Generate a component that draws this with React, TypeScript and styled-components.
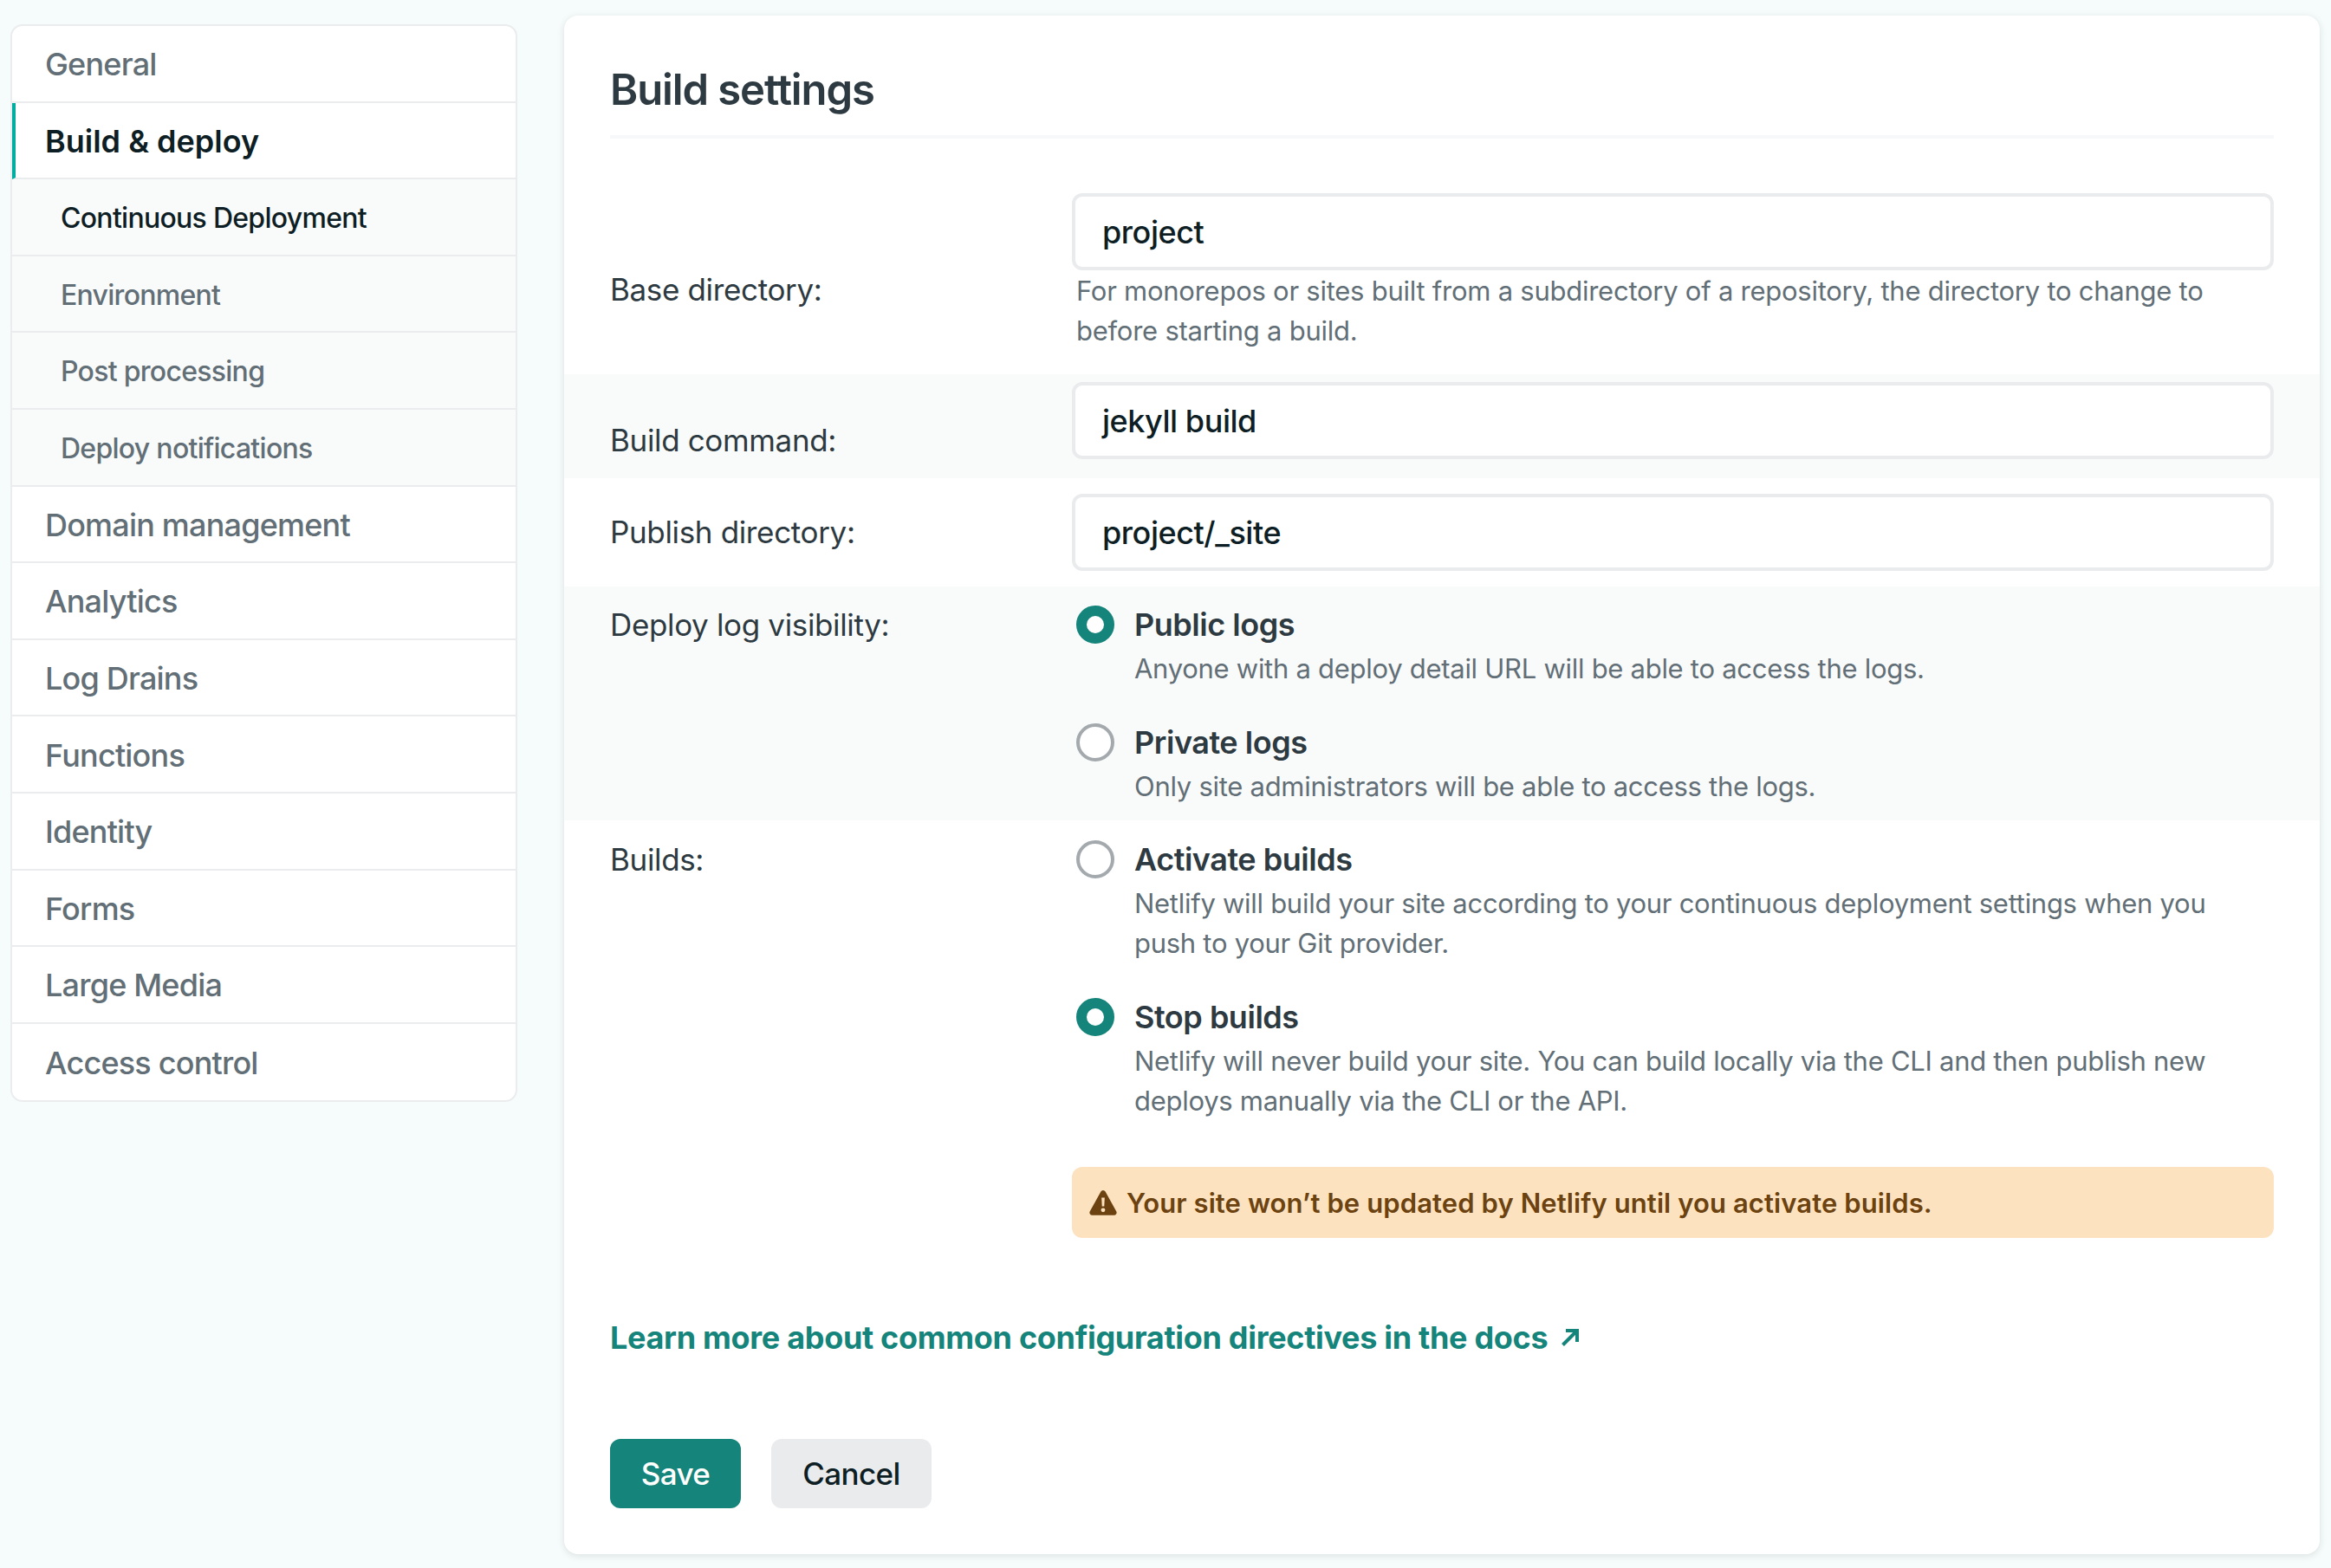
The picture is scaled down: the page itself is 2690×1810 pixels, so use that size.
import styled, { createGlobalStyle } from 'styled-components';

const GlobalStyle = createGlobalStyle`
  html, body {
    margin: 0;
    padding: 0;
    background: #f6fcfb;
    font-family: Inter, "Liberation Sans", sans-serif;
  }
  * {
    box-sizing: border-box;
  }
`;

const subPages = ['Continuous Deployment', 'Environment', 'Post processing', 'Deploy notifications'];
const lowerPages = ['Domain management', 'Analytics', 'Log Drains', 'Functions', 'Identity', 'Forms', 'Large Media', 'Access control'];

export default function App() {
  return (
    <Page>
      <GlobalStyle />
      <Sidebar>
        <NavItem>General</NavItem>
        <NavItem $active>Build &amp; deploy</NavItem>
        {subPages.map((name, i) => (
          <SubItem key={name} $active={i === 0}>{name}</SubItem>
        ))}
        {lowerPages.map(name => (
          <NavItem key={name}>{name}</NavItem>
        ))}
      </Sidebar>
      <Card>
        <Heading>Build settings</Heading>
        <Row $top={63} $bottom={27}>
          <Label $top={88}>Base directory:</Label>
          <div>
            <Input>project</Input>
            <FieldHint>
              For monorepos or sites built from a subdirectory of a repository, the directory to change to before starting a build.
            </FieldHint>
          </div>
        </Row>
        <Row $shaded $top={9} $bottom={21}>
          <Label $top={44}>Build command:</Label>
          <Input>jekyll build</Input>
        </Row>
        <Row $top={18} $bottom={18}>
          <Label $top={21}>Publish directory:</Label>
          <Input>project/_site</Input>
        </Row>
        <Row $shaded $top={21} $bottom={16}>
          <Label>Deploy log visibility:</Label>
          <Options>
            <Option>
              <Radio $checked />
              <div>
                <OptionTitle>Public logs</OptionTitle>
                <OptionText>Anyone with a deploy detail URL will be able to access the logs.</OptionText>
              </div>
            </Option>
            <Option>
              <Radio />
              <div>
                <OptionTitle>Private logs</OptionTitle>
                <OptionText>Only site administrators will be able to access the logs.</OptionText>
              </div>
            </Option>
          </Options>
        </Row>
        <Row $top={22} $bottom={0}>
          <Label>Builds:</Label>
          <div>
            <Options>
              <Option>
                <Radio />
                <div>
                  <OptionTitle>Activate builds</OptionTitle>
                  <OptionText>
                    Netlify will build your site according to your continuous deployment settings when you push to your Git provider.
                  </OptionText>
                </div>
              </Option>
              <Option>
                <Radio $checked />
                <div>
                  <OptionTitle>Stop builds</OptionTitle>
                  <OptionText>
                    Netlify will never build your site. You can build locally via the CLI and then publish new deploys manually via the CLI or the API.
                  </OptionText>
                </div>
              </Option>
            </Options>
            <Warning>
              <svg width="32" height="29" viewBox="0 0 32 29" aria-hidden="true">
                <path
                  fill="#6b4210"
                  fillRule="evenodd"
                  d="M13.4 1.6a3 3 0 0 1 5.2 0l12.6 22.6a3 3 0 0 1-2.6 4.5H3.4a3 3 0 0 1-2.6-4.5zM14.2 8.5l.5 10h2.6l.5-10zM16 20.4a2.4 2.4 0 1 0 0 4.8 2.4 2.4 0 0 0 0-4.8z"
                />
              </svg>
              Your site won’t be updated by Netlify until you activate builds.
            </Warning>
          </div>
        </Row>
        <DocsLink>
          Learn more about common configuration directives in the docs
          <svg width="22" height="22" viewBox="0 0 22 22" aria-hidden="true">
            <path d="M2.5 19.5 18 4M6 3h13v13" fill="none" stroke="#15847b" strokeWidth="4" />
          </svg>
        </DocsLink>
        <Actions>
          <SaveButton>Save</SaveButton>
          <CancelButton>Cancel</CancelButton>
        </Actions>
      </Card>
    </Page>
  );
}

const Page = styled.div`
  display: flex;
  align-items: flex-start;
  width: 2690px;
  height: 1810px;
  padding: 18px 13px 0 12px;
  overflow: hidden;
`;

const Sidebar = styled.nav`
  display: flex;
  flex-direction: column;
  flex: none;
  width: 585px;
  margin-top: 10px;
  margin-right: 54px;
  background: #fff;
  border: 2px solid #eaecee;
  border-radius: 14px;
  overflow: hidden;
`;

const NavItem = styled.a<{ $active?: boolean }>`
  display: flex;
  align-items: center;
  height: 88.6px;
  padding: 2px 0 0 ${p => (p.$active ? 34 : 38)}px;
  font-size: 36px;
  letter-spacing: ${p => (p.$active ? '0' : '-0.8px')};
  font-weight: ${p => (p.$active ? 600 : 500)};
  color: ${p => (p.$active ? '#0e1e25' : '#626f77')};
  border-bottom: 2px solid #eaecee;
  border-left: ${p => (p.$active ? '4px solid #00ad9f' : 'none')};
  &:last-child {
    border-bottom: none;
  }
`;

const SubItem = styled.a<{ $active?: boolean }>`
  display: flex;
  align-items: center;
  height: 88.6px;
  padding: 2px 0 0 56px;
  font-size: 32px;
  letter-spacing: -0.72px;
  font-weight: 500;
  color: ${p => (p.$active ? '#0e1e25' : '#626f77')};
  background: #f9fafa;
  border-bottom: 2px solid #eaecee;
`;

const Card = styled.main`
  flex: none;
  width: 2026px;
  height: 1776px;
  background: #fff;
  border-radius: 16px;
  box-shadow: 0 2px 8px rgba(14, 30, 37, 0.12);
`;

const Heading = styled.h2`
  margin: 0 53px;
  padding-top: 50px;
  height: 142px;
  font-size: 49px;
  letter-spacing: -1.1px;
  line-height: 72px;
  font-weight: 600;
  color: #2e3a41;
  border-bottom: 4px solid #f7f8f9;
`;

const Row = styled.div<{ $shaded?: boolean; $top: number; $bottom: number }>`
  display: grid;
  grid-template-columns: 533px 1387px;
  padding: ${p => p.$top}px 53px ${p => p.$bottom}px;
  background: ${p => (p.$shaded ? '#f9fafa' : 'transparent')};
`;

const Label = styled.div<{ $top?: number }>`
  padding-top: ${p => p.$top ?? 0}px;
  font-size: 35px;
  letter-spacing: -0.35px;
  line-height: 46px;
  color: #2e3a41;
`;

const Input = styled.div`
  display: flex;
  align-items: center;
  height: 89px;
  padding-left: 31px;
  font-size: 36px;
  letter-spacing: -0.45px;
  font-weight: 500;
  color: #0e1e25;
  background: #fff;
  border: 4px solid #e9ebed;
  border-radius: 12px;
`;

const FieldHint = styled.p`
  margin: 1px 30px 0 5px;
  font-size: 31px;
  letter-spacing: -0.25px;
  line-height: 46px;
  color: #626f77;
`;

const Options = styled.div`
  display: flex;
  flex-direction: column;
  gap: 39px;
`;

const Option = styled.div`
  display: flex;
  gap: 23px;
  padding: 0 40px 0 5px;
`;

const Radio = styled.span<{ $checked?: boolean }>`
  flex: none;
  width: 44px;
  height: 44px;
  margin-top: 1px;
  border-radius: 50%;
  background: #fff;
  border: ${p => (p.$checked ? '12px solid #15847b' : '4px solid #a3a9ac')};
`;

const OptionTitle = styled.div`
  font-size: 36px;
  letter-spacing: -0.47px;
  line-height: 46px;
  font-weight: 600;
  color: #2e3a41;
`;

const OptionText = styled.div`
  margin-top: 5px;
  font-size: 31px;
  letter-spacing: -0.28px;
  line-height: 46px;
  color: #626f77;
`;

const Warning = styled.div`
  display: flex;
  align-items: center;
  gap: 11px;
  height: 82px;
  margin-top: 53px;
  padding-left: 20px;
  font-size: 31px;
  letter-spacing: 0.1px;
  font-weight: 600;
  color: #6b4210;
  background: #fde2bf;
  border-radius: 12px;
`;

const DocsLink = styled.a`
  display: flex;
  align-items: center;
  gap: 15px;
  margin: 92px 53px 0;
  font-size: 36px;
  letter-spacing: -0.31px;
  line-height: 46px;
  font-weight: 700;
  color: #15847b;
`;

const Actions = styled.div`
  display: flex;
  gap: 35px;
  margin: 94px 53px 0;
`;

const Button = styled.button`
  height: 80px;
  padding: 0;
  border: none;
  border-radius: 12px;
  font-family: inherit;
  font-size: 35px;
  letter-spacing: -0.6px;
  font-weight: 500;
`;

const SaveButton = styled(Button)`
  width: 151px;
  color: #fff;
  background: #15847b;
`;

const CancelButton = styled(Button)`
  width: 185px;
  color: #0e1e25;
  background: #e9ebed;
`;
